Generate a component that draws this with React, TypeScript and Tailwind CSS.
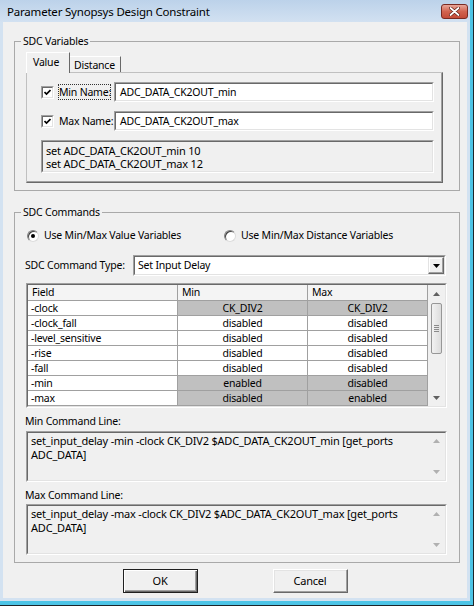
import React from "react";

const rows = [
  { field: "-clock", min: "CK_DIV2", max: "CK_DIV2", gray: true },
  { field: "-clock_fall", min: "disabled", max: "disabled", gray: false },
  { field: "-level_sensitive", min: "disabled", max: "disabled", gray: false },
  { field: "-rise", min: "disabled", max: "disabled", gray: false },
  { field: "-fall", min: "disabled", max: "disabled", gray: false },
  { field: "-min", min: "enabled", max: "disabled", gray: true },
  { field: "-max", min: "disabled", max: "enabled", gray: true },
  { field: "", min: "", max: "", gray: false },
];

// classic two-tone sunken edge
const Sunken = ({ className = "", inner = "", children }: { className?: string; inner?: string; children?: React.ReactNode }) => (
  <div className={`border border-t-[#a0a0a0] border-l-[#a0a0a0] border-r-white border-b-white ${className}`}>
    <div className={`h-full w-full border border-t-[#696969] border-l-[#696969] border-r-[#e3e3e3] border-b-[#e3e3e3] ${inner}`}>
      {children}
    </div>
  </div>
);

const CheckBox = () => (
  <Sunken className="w-[13px] h-[13px] shrink-0" inner="bg-white flex items-center justify-center">
    <svg width="7" height="7" viewBox="0 0 7 7">
      <path d="M0.5 3 L2.5 5 L6.5 1" stroke="#000" strokeWidth="1.7" fill="none" />
    </svg>
  </Sunken>
);

const Radio = ({ on }: { on?: boolean }) => (
  <span className="w-[12px] h-[12px] rounded-full bg-white border border-t-[#808080] border-l-[#808080] border-r-[#dcdcdc] border-b-[#dcdcdc] shadow-[inset_1px_1px_0_#404040] flex items-center justify-center shrink-0">
    {on && <span className="w-[4px] h-[4px] rounded-full bg-black" />}
  </span>
);

const Arrow = ({ up, color = "#606060" }: { up?: boolean; color?: string }) => (
  <svg width="7" height="4" viewBox="0 0 7 4">
    <path d={up ? "M0 4 L3.5 0 L7 4 Z" : "M0 0 L7 0 L3.5 4 Z"} fill={color} />
  </svg>
);

const CommandBox = ({ text }: { text: string }) => (
  <Sunken className="w-[421px] h-[51px]" inner="bg-[#f0f0f0] flex">
    <div className="flex-1 pl-[3px] leading-[14px] pt-[1px] text-[11px]">{text}</div>
    <div className="w-[17px] flex flex-col items-center justify-between py-[6px]">
      <Arrow up color="#b0b0b0" />
      <Arrow color="#b0b0b0" />
    </div>
  </Sunken>
);

export default function App() {
  return (
    <div className="w-[474px] h-[606px] bg-[#4cc4e6] border-r border-b border-[#1d2529] overflow-hidden font-['Noto_Sans',sans-serif] text-[10.5px] tracking-[-0.2px] text-black">
      <div className="w-[470px] h-[601px] bg-[#d3e2f1] flex flex-col">
        {/* title bar */}
        <div className="h-[22px] flex items-center justify-between pl-[7px] pr-[2px] bg-gradient-to-b from-[#bcd2ea] to-[#d2e1f1]">
          <span className="text-[11.5px] pt-[1px]">Parameter Synopsys Design Constraint</span>
          <div className="w-[27px] h-[15px] rounded-[3px] border border-[#7a2a22] bg-gradient-to-b from-[#e8a69a] via-[#d2634f] to-[#c44b38] flex items-center justify-center">
            <svg width="11" height="9" viewBox="0 0 11 9">
              <path d="M1.5 1 L9.5 8 M9.5 1 L1.5 8" stroke="#5a1a12" strokeWidth="3.2" strokeLinecap="round" />
              <path d="M1.5 1 L9.5 8 M9.5 1 L1.5 8" stroke="#fff" strokeWidth="1.8" strokeLinecap="round" />
            </svg>
          </div>
        </div>

        {/* client area */}
        <div className="ml-[3px] w-[464px] h-[576px] bg-[#f0f0f0] flex flex-col">
          {/* SDC Variables */}
          <div className="relative ml-[11px] mt-[19px] w-[446px] h-[150px] border border-[#a9a9a9] pt-[10px] pl-[11px]">
            <span className="absolute left-[6px] -top-[8px] px-[2px] bg-[#f0f0f0] leading-[15px]">SDC Variables</span>
            <div className="flex items-end h-[20px]">
              <div className="relative z-10 -mb-px h-[21px] w-[44px] bg-[#f0f0f0] border-t border-l border-white border-r border-r-[#696969] pl-[6px] pt-[2px] leading-[15px]">
                Value
              </div>
              <div className="h-[16px] w-[51px] border-t border-white border-r border-r-[#696969] pl-[4px] pt-px leading-[15px]">
                Distance
              </div>
            </div>
            <div className="w-[417px] h-[111px] border border-t-[#c0c0c0] border-l-[#c0c0c0] border-r-[#696969] border-b-[#696969] shadow-[inset_-1px_-1px_0_#a0a0a0] pt-[9px] pl-[14px]">
              <div className="flex items-center h-[20px]">
                <CheckBox />
                <span className="ml-[4px] w-[53px] h-[16px] border border-dotted border-[#333] leading-[14px] whitespace-nowrap">Min Name:</span>
                <Sunken className="ml-[3px] w-[320px] h-[20px]" inner="bg-white pl-[4px] leading-[16px]">
                  ADC_DATA_CK2OUT_min
                </Sunken>
              </div>
              <div className="flex items-center h-[20px] mt-[9px]">
                <CheckBox />
                <span className="ml-[4px] w-[53px] pl-[1px] leading-[14px] whitespace-nowrap">Max Name:</span>
                <Sunken className="ml-[3px] w-[320px] h-[20px]" inner="bg-white pl-[4px] leading-[16px]">
                  ADC_DATA_CK2OUT_max
                </Sunken>
              </div>
              <Sunken className="mt-[9px] w-[393px] h-[33px]" inner="bg-[#f0f0f0] pl-[3px] pt-[2px] leading-[13px] text-[11px]">
                <div>set ADC_DATA_CK2OUT_min 10</div>
                <div>set ADC_DATA_CK2OUT_max 12</div>
              </Sunken>
            </div>
          </div>

          {/* SDC Commands */}
          <div className="relative ml-[11px] mt-[21px] w-[446px] h-[351px] border border-[#a9a9a9] pt-[15px] pl-[11px]">
            <span className="absolute left-[6px] -top-[8px] px-[2px] bg-[#f0f0f0] leading-[15px]">SDC Commands</span>
            <div className="flex items-center h-[15px] ml-[1px]">
              <div className="w-[197px] flex items-center gap-[5px]">
                <Radio on />
                <span>Use Min/Max Value Variables</span>
              </div>
              <div className="flex items-center gap-[5px]">
                <Radio />
                <span>Use Min/Max Distance Variables</span>
              </div>
            </div>

            <div className="flex items-center mt-[12px] h-[21px]">
              <span className="w-[108px] -ml-[1px] pr-[1px] whitespace-nowrap">SDC Command Type:</span>
              <Sunken className="w-[313px] h-[21px]" inner="bg-white flex items-center">
                <span className="flex-1 pl-[3px]">Set Input Delay</span>
                <div className="w-[16px] h-[17px] border border-t-[#e3e3e3] border-l-[#e3e3e3] border-r-[#696969] border-b-[#696969] bg-[#f0f0f0] shadow-[inset_-1px_-1px_0_#a0a0a0,inset_1px_1px_0_#fff] flex items-center justify-center">
                  <Arrow color="#000" />
                </div>
              </Sunken>
            </div>

            {/* grid */}
            <Sunken className="mt-[7px] w-[421px] h-[125px]" inner="flex bg-white overflow-hidden">
              <div className="w-[400px] overflow-hidden">
                <div className="grid grid-cols-[150px_130px_120px] h-[16px] bg-[#f4f4f4] leading-[15px]">
                  <div className="border-r border-b border-[#a0a0a0] pl-[4px]">Field</div>
                  <div className="border-r border-b border-[#a0a0a0] pl-[4px]">Min</div>
                  <div className="border-r border-b border-[#a0a0a0] pl-[4px]">Max</div>
                </div>
                {rows.map((r, i) => (
                  <div key={i} className="grid grid-cols-[150px_130px_120px] h-[15px] leading-[14px]">
                    <div className="border-r border-b border-[#a0a0a0] pl-[3px]">{r.field}</div>
                    <div className={`border-r border-b border-[#a0a0a0] text-center ${r.gray ? "bg-[#c0c0c0]" : "bg-white"}`}>{r.min}</div>
                    <div className={`border-r border-b border-[#a0a0a0] text-center ${r.gray ? "bg-[#c0c0c0]" : "bg-white"}`}>{r.max}</div>
                  </div>
                ))}
              </div>
              <div className="w-[17px] bg-[#f0f0f0] flex flex-col items-center">
                <div className="h-[17px] flex items-center justify-center">
                  <Arrow up />
                </div>
                <div className="w-[11px] h-[51px] mt-[1px] rounded-[2px] border border-[#979797] bg-gradient-to-r from-[#f2f2f2] to-[#dcdcdc] flex flex-col items-center justify-center gap-[1px]">
                  <span className="w-[5px] h-px bg-[#8a8a8a]" />
                  <span className="w-[5px] h-px bg-[#8a8a8a]" />
                  <span className="w-[5px] h-px bg-[#8a8a8a]" />
                  <span className="w-[5px] h-px bg-[#8a8a8a]" />
                </div>
                <div className="flex-1" />
                <div className="h-[17px] flex items-center justify-center">
                  <Arrow />
                </div>
              </div>
            </Sunken>

            <div className="mt-[6px] h-[15px] leading-[15px] -ml-[1px]">Min Command Line:</div>
            <div className="mt-[2px]">
              <CommandBox text="set_input_delay -min -clock CK_DIV2 $ADC_DATA_CK2OUT_min [get_ports ADC_DATA]" />
            </div>
            <div className="mt-[6px] h-[15px] leading-[15px] -ml-[1px]">Max Command Line:</div>
            <div className="mt-[1px]">
              <CommandBox text="set_input_delay -max -clock CK_DIV2 $ADC_DATA_CK2OUT_max [get_ports ADC_DATA]" />
            </div>
          </div>

          {/* buttons */}
          <div className="mt-[6px] flex justify-center gap-[75px]">
            <button className="w-[75px] h-[24px] border border-[#202020] bg-[#f0f0f0] shadow-[inset_1px_1px_0_#fff,inset_-1px_-1px_0_#696969,inset_-2px_-2px_0_#a0a0a0] text-[11px]">
              OK
            </button>
            <button className="w-[75px] h-[24px] border border-t-white border-l-white border-r-[#696969] border-b-[#696969] bg-[#f0f0f0] shadow-[inset_-1px_-1px_0_#a0a0a0,inset_1px_1px_0_#e3e3e3] text-[11px]">
              Cancel
            </button>
          </div>
        </div>
      </div>
    </div>
  );
}
